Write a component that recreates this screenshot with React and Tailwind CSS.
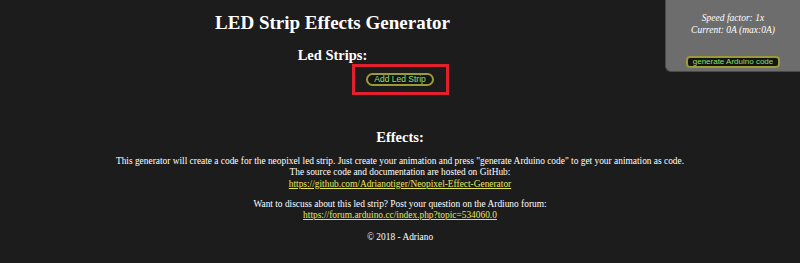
export default function App() {
  return (
    <div className="relative min-h-[263px] w-full bg-[#1c1c1c] text-white font-['Liberation_Serif',serif] text-center">
      <div className="absolute right-0 top-0 w-[135px] h-[72px] bg-[#6d6d6d] rounded-bl-[6px] border-l border-b border-[#4a4a4a] flex flex-col items-center">
        <div className="italic text-[9.5px] leading-[12px] mt-[12px]">Speed factor: 1x</div>
        <div className="italic text-[9.5px] leading-[12px]">Current: 0A (max:0A)</div>
        <button className="mt-[20px] h-[12px] px-[5px] rounded-[4px] border-2 border-[#9a9a36] bg-[#141414] text-[#88e070] text-[8px] leading-none font-['Liberation_Sans',sans-serif] flex items-center">
          generate Arduino code
        </button>
      </div>
      <header className="pr-[135px]">
        <h1 className="text-[19px] font-bold leading-none pt-[13px]">LED Strip Effects Generator</h1>
        <h2 className="text-[14.5px] font-bold leading-none mt-[16px]">Led Strips:</h2>
      </header>
      <div className="flex justify-center mt-[1.5px]">
        <div className="w-[97px] h-[31px] border-[3px] border-[#e0202c] flex items-center justify-center">
          <button className="h-[13px] px-[6px] rounded-full border-2 border-[#9a9a36] bg-[#141414] text-[#88e070] text-[8.5px] leading-none font-['Liberation_Sans',sans-serif] flex items-center">
            Add Led Strip
          </button>
        </div>
      </div>
      <h2 className="text-[14.5px] font-bold leading-none mt-[35px]">Effects:</h2>
      <div className="text-[9.4px] leading-[11.5px] mt-[11px]">
        <p>
          This generator will create a code for the neopixel led strip. Just create your animation and press "generate Arduino code" to get your animation as code.
        </p>
        <p>The source code and documentation are hosted on GitHub:</p>
        <p>
          <a href="#" className="text-[#e6e65c] underline">https://github.com/Adrianotiger/Neopixel-Effect-Generator</a>
        </p>
        <p className="mt-[8.5px]">Want to discuss about this led strip? Post your question on the Ardiuno forum:</p>
        <p>
          <a href="#" className="text-[#e6e65c] underline">https://forum.arduino.cc/index.php?topic=534060.0</a>
        </p>
        <p className="mt-[10px]">© 2018 - Adriano</p>
      </div>
    </div>
  );
}
